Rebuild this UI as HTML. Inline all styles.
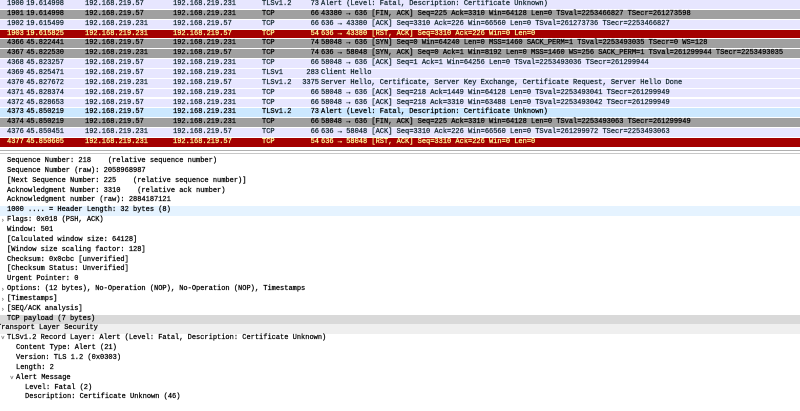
<!DOCTYPE html>
<html><head><meta charset="utf-8"><style>
*{margin:0;padding:0;box-sizing:border-box}
body{width:800px;height:411px;overflow:hidden;background:#fff;font-family:"Liberation Mono",monospace;font-size:7px;position:relative;-webkit-text-stroke:0.25px}
.r{position:absolute;left:0;width:800px;height:9.85px;line-height:9.85px;white-space:pre;color:#12272e;background:#e7e6ff;border-bottom:1px solid #fff}
.g{background:#a0a0a0;color:#000}
.red{background:#a40000;color:#fffc9c}
.sel{background:#cce8ff;color:#000}
.r span{position:absolute;top:0}
.d{position:absolute;left:0;width:800px;height:9.85px;line-height:9.85px;white-space:pre;color:#000}
.hl{background:#e5f3ff}
.gp{background:#d9d9d9}
.lg{background:#efefef}
.ar{position:absolute;color:#777;font-size:6px}
</style></head><body>
<div id="pl"></div>
<div style="position:absolute;left:0;top:150px;width:800px;height:1px;background:#b0b0b0"></div>
<div style="position:absolute;left:0;top:153px;width:800px;height:1px;background:#c8c8c8"></div>
<div id="dt"></div>
<script>
var rows=[
["","1900","19.614998","192.168.219.57","192.168.219.231","TLSv1.2","73","Alert (Level: Fatal, Description: Certificate Unknown)"],
["g","1901","19.614998","192.168.219.57","192.168.219.231","TCP","66","43380 → 636 [FIN, ACK] Seq=225 Ack=3310 Win=64128 Len=0 TSval=2253466827 TSecr=261273598"],
["","1902","19.615499","192.168.219.231","192.168.219.57","TCP","66","636 → 43380 [ACK] Seq=3310 Ack=226 Win=66560 Len=0 TSval=261273736 TSecr=2253466827"],
["red","1903","19.615825","192.168.219.231","192.168.219.57","TCP","54","636 → 43380 [RST, ACK] Seq=3310 Ack=226 Win=0 Len=0"],
["g","4366","45.822441","192.168.219.57","192.168.219.231","TCP","74","58048 → 636 [SYN] Seq=0 Win=64240 Len=0 MSS=1460 SACK_PERM=1 TSval=2253493035 TSecr=0 WS=128"],
["g","4367","45.822530","192.168.219.231","192.168.219.57","TCP","74","636 → 58048 [SYN, ACK] Seq=0 Ack=1 Win=8192 Len=0 MSS=1460 WS=256 SACK_PERM=1 TSval=261299944 TSecr=2253493035"],
["","4368","45.823257","192.168.219.57","192.168.219.231","TCP","66","58048 → 636 [ACK] Seq=1 Ack=1 Win=64256 Len=0 TSval=2253493036 TSecr=261299944"],
["","4369","45.825471","192.168.219.57","192.168.219.231","TLSv1","283","Client Hello"],
["","4370","45.827672","192.168.219.231","192.168.219.57","TLSv1.2","3375","Server Hello, Certificate, Server Key Exchange, Certificate Request, Server Hello Done"],
["","4371","45.828374","192.168.219.57","192.168.219.231","TCP","66","58048 → 636 [ACK] Seq=218 Ack=1449 Win=64128 Len=0 TSval=2253493041 TSecr=261299949"],
["","4372","45.828653","192.168.219.57","192.168.219.231","TCP","66","58048 → 636 [ACK] Seq=218 Ack=3310 Win=63488 Len=0 TSval=2253493042 TSecr=261299949"],
["sel","4373","45.850219","192.168.219.57","192.168.219.231","TLSv1.2","73","Alert (Level: Fatal, Description: Certificate Unknown)"],
["g","4374","45.850219","192.168.219.57","192.168.219.231","TCP","66","58048 → 636 [FIN, ACK] Seq=225 Ack=3310 Win=64128 Len=0 TSval=2253493063 TSecr=261299949"],
["","4376","45.850451","192.168.219.231","192.168.219.57","TCP","66","636 → 58048 [ACK] Seq=3310 Ack=226 Win=66560 Len=0 TSval=261299972 TSecr=2253493063"],
["red","4377","45.850605","192.168.219.231","192.168.219.57","TCP","54","636 → 58048 [RST, ACK] Seq=3310 Ack=226 Win=0 Len=0"]];
var h="";
rows.forEach(function(r,i){
h+='<div class="r '+r[0]+'" style="top:'+(i*9.85).toFixed(2)+'px">'+
'<span style="left:7px">'+r[1]+'</span><span style="right:736px">'+r[2]+'</span>'+
'<span style="left:85px">'+r[3]+'</span><span style="left:173px">'+r[4]+'</span>'+
'<span style="left:262px">'+r[5]+'</span><span style="right:481px">'+r[6]+'</span>'+
'<span style="left:321px">'+r[7]+'</span></div>';});
document.getElementById("pl").innerHTML=h;
var d=[
["",7,"Sequence Number: 218    (relative sequence number)"],
["",7,"Sequence Number (raw): 2058968987"],
["",7,"[Next Sequence Number: 225    (relative sequence number)]"],
["",7,"Acknowledgment Number: 3310    (relative ack number)"],
["",7,"Acknowledgment number (raw): 2884187121"],
["hl",7,"1000 .... = Header Length: 32 bytes (8)"],
["",7,"Flags: 0x018 (PSH, ACK)",">"],
["",7,"Window: 501"],
["",7,"[Calculated window size: 64128]"],
["",7,"[Window size scaling factor: 128]"],
["",7,"Checksum: 0x0cbc [unverified]"],
["",7,"[Checksum Status: Unverified]"],
["",7,"Urgent Pointer: 0"],
["",7,"Options: (12 bytes), No-Operation (NOP), No-Operation (NOP), Timestamps",">"],
["",7,"[Timestamps]",">"],
["",7,"[SEQ/ACK analysis]",">"],
["gp",7,"TCP payload (7 bytes)"],
["lg",-3,"Transport Layer Security"],
["",7,"TLSv1.2 Record Layer: Alert (Level: Fatal, Description: Certificate Unknown)","v"],
["",16,"Content Type: Alert (21)"],
["",16,"Version: TLS 1.2 (0x0303)"],
["",16,"Length: 2"],
["",16,"Alert Message","v"],
["",25,"Level: Fatal (2)"],
["",25,"Description: Certificate Unknown (46)"]];
h="";
d.forEach(function(r,i){
h+='<div class="d '+r[0]+'" style="top:'+(157+i*9.85).toFixed(2)+'px"><span style="position:absolute;left:'+r[1]+'px">'+r[2]+'</span>'+(r[3]?'<span class="ar" style="left:'+(r[1]-6)+'px">'+(r[3]==">"?"›":"˅")+'</span>':'')+'</div>';});
document.getElementById("dt").innerHTML=h;
</script>
</body></html>
